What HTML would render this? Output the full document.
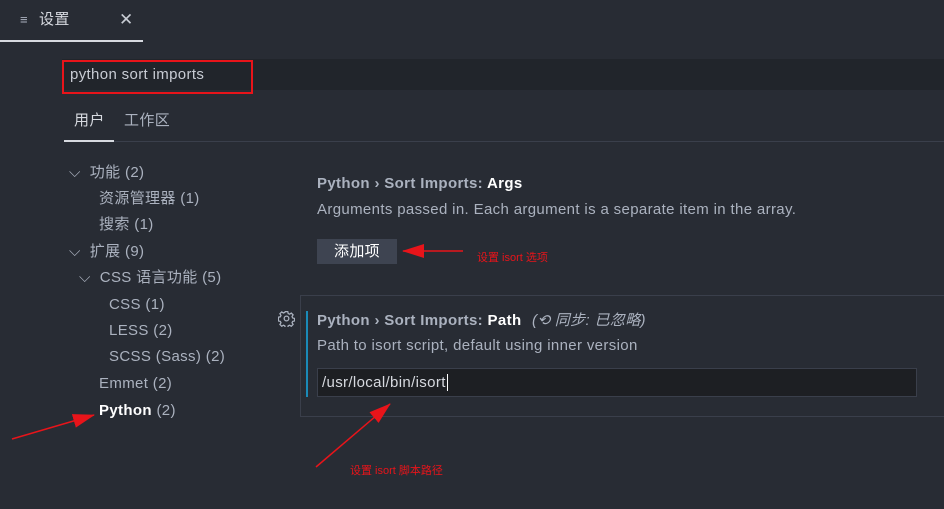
<!DOCTYPE html>
<html><head><meta charset="utf-8"><style>
body{margin:0;width:944px;height:509px;background:#282c34;overflow:hidden;position:relative;font-family:"Liberation Sans","Noto Sans CJK SC",sans-serif;color:#abb2bf;font-size:15px;letter-spacing:0.35px}
.a{position:absolute;white-space:nowrap}
.t{line-height:20px}
</style></head><body>
<div class="a" style="left:0;top:40px;width:143px;height:2px;background:#d7dae0"></div>
<div class="a t" style="left:20px;top:10px;font-size:13px;color:#abb2bf">≡</div>
<div class="a t" style="left:39px;top:10px;color:#d7dae0">设置</div>
<div class="a t" style="left:119px;top:10px;font-size:17px;color:#c8ccd4">✕</div>

<div class="a" style="left:62px;top:59px;width:882px;height:31px;background:#21252b"></div>
<div class="a" style="left:62px;top:60px;width:187px;height:30px;border:2px solid #e8141a"></div>
<div class="a t" style="left:70px;top:65px;color:#c8ccd4">python sort imports</div>

<div class="a t" style="left:74px;top:111px;color:#d7dae0">用户</div>
<div class="a t" style="left:124px;top:111px;color:#abb2bf">工作区</div>
<div class="a" style="left:64px;top:141px;width:880px;height:1px;background:#3a3f4b"></div>
<div class="a" style="left:64px;top:140px;width:50px;height:2px;background:#d7dae0"></div>

<div class="a t" style="left:69px;top:163px">⌵&nbsp; 功能 (2)</div>
<div class="a t" style="left:99px;top:189px">资源管理器 (1)</div>
<div class="a t" style="left:99px;top:215px">搜索 (1)</div>
<div class="a t" style="left:69px;top:242px">⌵&nbsp; 扩展 (9)</div>
<div class="a t" style="left:79px;top:268px">⌵&nbsp; CSS 语言功能 (5)</div>
<div class="a t" style="left:109px;top:295px">CSS (1)</div>
<div class="a t" style="left:109px;top:321px">LESS (2)</div>
<div class="a t" style="left:109px;top:347px">SCSS (Sass) (2)</div>
<div class="a t" style="left:99px;top:374px">Emmet (2)</div>
<div class="a t" style="left:99px;top:401px"><b style="color:#fff">Python</b> (2)</div>

<div class="a t" style="left:317px;top:174px"><b>Python › Sort Imports: </b><b style="color:#fff">Args</b></div>
<div class="a t" style="left:317px;top:200px">Arguments passed in. Each argument is a separate item in the array.</div>
<div class="a t" style="left:317px;top:239px;width:80px;height:25px;line-height:25px;background:#3e4451;color:#fff;text-align:center">添加项</div>
<div class="a" style="left:477px;top:249px;font-size:11px;color:#e8141a;letter-spacing:0">设置 isort 选项</div>

<div class="a" style="left:300px;top:295px;width:650px;height:122px;border:1px solid #3a3f4b;box-sizing:border-box"></div>
<div class="a" style="left:306px;top:311px;width:2px;height:86px;background:#1a8ab8"></div>
<svg class="a" style="left:278px;top:310px" width="17" height="17" viewBox="0 0 16 16"><g fill="none" stroke="#abb2bf" stroke-width="1.2"><circle cx="8" cy="8" r="2.2"/><path d="M6.8 1.5h2.4l.4 1.8 1.3.6 1.6-1 1.7 1.7-1 1.6.6 1.3 1.8.4v2.4l-1.8.4-.6 1.3 1 1.6-1.7 1.7-1.6-1-1.3.6-.4 1.8H6.8l-.4-1.8-1.3-.6-1.6 1-1.7-1.7 1-1.6-.6-1.3-1.8-.4V6.8l1.8-.4.6-1.3-1-1.6 1.7-1.7 1.6 1 1.3-.6z"/></g></svg>
<div class="a t" style="left:317px;top:311px"><b>Python › Sort Imports: </b><b style="color:#fff">Path</b> <i style="margin-left:6px">(⟲ 同步: 已忽略)</i></div>
<div class="a t" style="left:317px;top:336px">Path to isort script, default using inner version</div>
<div class="a" style="left:317px;top:368px;width:600px;height:29px;background:#1d1f23;border:1px solid #3a3f4b;box-sizing:border-box"></div>
<div class="a t" style="left:322px;top:373px;color:#d7dae0">/usr/local/bin/isort<span style="border-left:1px solid #fff;margin-left:1px"></span></div>
<div class="a" style="left:350px;top:462px;font-size:11px;color:#e8141a;letter-spacing:0">设置 isort 脚本路径</div>

<svg class="a" style="left:0;top:0" width="944" height="509">
<defs><marker id="m" markerWidth="22" markerHeight="14" refX="21" refY="7" orient="auto" markerUnits="userSpaceOnUse"><path d="M0 0L22 7L0 14z" fill="#e8141a"/></marker></defs>
<g stroke="#e8141a" stroke-width="1.5">
<line x1="463" y1="251" x2="403" y2="251" marker-end="url(#m)"/>
<line x1="12" y1="439" x2="94" y2="415" marker-end="url(#m)"/>
<line x1="316" y1="467" x2="390" y2="404" marker-end="url(#m)"/>
</g></svg>
</body></html>
